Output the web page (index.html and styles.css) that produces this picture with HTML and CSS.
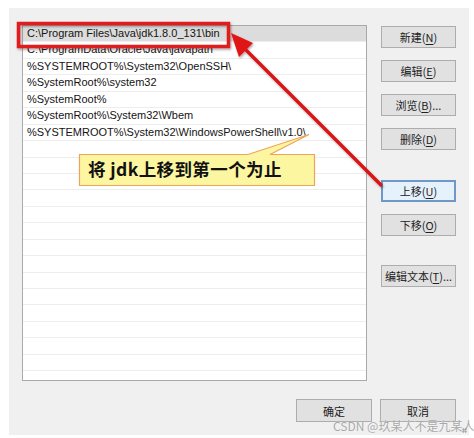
FILE: index.html
```html
<!DOCTYPE html>
<html lang="zh-CN">
<head>
<meta charset="utf-8">
<title>编辑环境变量</title>
<link rel="stylesheet" href="styles.css">
</head>
<body>
<div class="dialog">
  <div class="main">
    <div class="list">
      <div class="row sel">C:\Program Files\Java\jdk1.8.0_131\bin</div>
      <div class="row">C:\ProgramData\Oracle\Java\javapath</div>
      <div class="row">%SYSTEMROOT%\System32\OpenSSH\</div>
      <div class="row">%SystemRoot%\system32</div>
      <div class="row">%SystemRoot%</div>
      <div class="row">%SystemRoot%\System32\Wbem</div>
      <div class="row">%SYSTEMROOT%\System32\WindowsPowerShell\v1.0\</div>
      <div class="row"></div><div class="row"></div><div class="row"></div>
      <div class="row"></div><div class="row"></div><div class="row"></div>
      <div class="row"></div><div class="row"></div><div class="row"></div>
      <div class="row"></div><div class="row"></div><div class="row"></div>
      <div class="row"></div><div class="row"></div>
    </div>
    <div class="side">
      <button class="btn">新建(<u>N</u>)</button>
      <button class="btn">编辑(<u>E</u>)</button>
      <button class="btn">浏览(<u>B</u>)...</button>
      <button class="btn">删除(<u>D</u>)</button>
      <button class="btn focus sep1">上移(<u>U</u>)</button>
      <button class="btn">下移(<u>O</u>)</button>
      <button class="btn sep2">编辑文本(<u>T</u>)...</button>
    </div>
  </div>
  <div class="footer">
    <button class="btn wide">确定</button>
    <button class="btn wide">取消</button>
  </div>
</div>

<svg class="overlay" width="474" height="438" viewBox="0 0 474 438" xmlns="http://www.w3.org/2000/svg">
  <defs>
    <filter id="sh" x="-20%" y="-20%" width="140%" height="140%">
      <feDropShadow dx="1" dy="1.5" stdDeviation="1" flood-color="#000" flood-opacity="0.35"/>
    </filter>
  </defs>
  <rect x="18.5" y="23.5" width="210" height="23" fill="none" stroke="#e01b1b" stroke-width="3.5" filter="url(#sh)"/>
  <g filter="url(#sh)">
    <line x1="245" y1="49" x2="381" y2="185" stroke="#d81414" stroke-width="3.2" stroke-linecap="round"/>
    <polygon points="231,33 239,57 253,43" fill="#e01515"/>
  </g>
  <path d="M79.5 154.5 H248 L309 134.5 L270 154.5 H314.5 V185.5 H79.5 Z" fill="#fcf6a0" stroke="#eda45a" stroke-width="1.2"/>
</svg>
<div class="callout-text">将 jdk上移到第一个为止</div>
<div class="watermark">CSDN @玖某人不是九某人</div>
<div class="grip"></div>
</body>
</html>
```

FILE: styles.css
```css
html, body {
  margin: 0;
  padding: 0;
  background: #ffffff;
}
body {
  position: relative;
  width: 474px;
  height: 438px;
  overflow: hidden;
  font-family: "Liberation Sans", "Noto Sans CJK SC", sans-serif;
}
.dialog {
  margin: 8px 0 0 9px;
  width: 460px;
  height: 427px;
  box-sizing: border-box;
  background: #f0f0f0;
  padding: 17px 13px 0 13px;
}
.main {
  display: flex;
  gap: 14px;
}
.list {
  width: 345px;
  height: 356px;
  box-sizing: border-box;
  border: 1px solid #a9a9a9;
  background: #ffffff;
  overflow: hidden;
}
.row {
  height: 16.45px;
  box-sizing: border-box;
  border-bottom: 1px solid #ededed;
  padding-left: 4px;
  font-size: 11px;
  line-height: 15.5px;
  color: #141414;
  white-space: nowrap;
}
.row.sel {
  background: #dcdcdc;
}
.side {
  display: flex;
  flex-direction: column;
  gap: 12px;
  padding-top: 1px;
}
.btn {
  width: 75px;
  height: 22px;
  box-sizing: border-box;
  border: 1px solid #adadad;
  background: #e1e1e1;
  font-family: "Noto Sans CJK SC", sans-serif;
  font-size: 11px;
  line-height: 18px;
  color: #222222;
  padding: 0;
  text-align: center;
}
.btn u {
  text-decoration: underline;
  text-underline-offset: 2px;
}
.btn.focus {
  border: 2px solid #6d98c8;
  background: #e5f1fb;
}
.sep1 { margin-top: 18px; }
.sep2 { margin-top: 17px; }
.footer {
  display: flex;
  justify-content: flex-end;
  gap: 8px;
  margin-top: 18px;
}
.btn.wide {
  width: 76px;
  height: 23px;
}
.overlay {
  position: absolute;
  left: 0;
  top: 0;
  pointer-events: none;
}
.callout-text {
  position: absolute;
  left: 88px;
  top: 156px;
  font-family: "Noto Sans CJK SC", sans-serif;
  font-weight: 700;
  font-size: 17.5px;
  line-height: 26px;
  letter-spacing: 0.4px;
  color: #111111;
  white-space: nowrap;
}
.watermark {
  position: absolute;
  left: 333px;
  top: 418px;
  font-family: "Noto Sans CJK SC", sans-serif;
  font-size: 12px;
  line-height: 16px;
  color: #a8a8a8;
  white-space: nowrap;
  text-shadow: 0 0 1px #ffffff;
}
.grip {
  position: absolute;
  left: 462px;
  top: 428px;
  width: 5px;
  height: 5px;
  background: radial-gradient(circle, #9a9a9a 0.8px, transparent 1px) 0 0 / 2.5px 2.5px;
}
```
